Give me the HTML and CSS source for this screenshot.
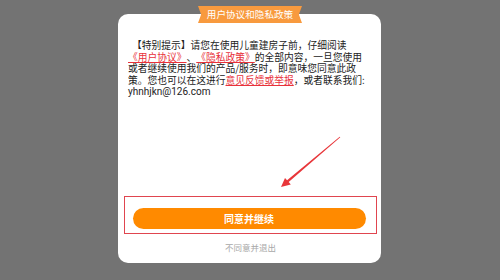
FILE: index.html
```html
<!DOCTYPE html>
<html lang="zh-CN">
<head>
    <meta charset="UTF-8">
    <meta name="viewport" content="width=device-width, initial-scale=1.0">
    <title>用户协议和隐私政策</title>
    <link rel="stylesheet" href="styles.css">
</head>
<body>
    <div class="dialog">
        <div class="ribbon">用户协议和隐私政策</div>

        <p class="notice">
            【特别提示】请您在使用儿童建房子前，仔细阅读<br>
            <a href="#">《用户协议》</a>、<a href="#">《隐私政策》</a>的全部内容，一旦您使用<br>
            或者继续使用我们的产品/服务时，即意味您同意此政<br>
            策。您也可以在这进行<a href="#">意见反馈或举报</a>，或者联系我们:<br>
            <span class="email">yhnhjkn@126.com</span>
        </p>

        <div class="actions">
            <div class="highlight">
                <button class="agree">同意并继续</button>
            </div>
            <div class="decline">不同意并退出</div>
        </div>

        <svg class="arrow" width="263" height="249" viewBox="0 0 263 249">
            <polygon fill="#e8363a" points="221.7,122.7 169.1,166.3 167.0,163.9 163,173 172.8,170.4 170.7,168.1 222.3,123.3"/>
        </svg>
    </div>
</body>
</html>
```

FILE: styles.css
```css
body {
    margin: 0;
    background: #737373;
    font-family: "Noto Sans CJK SC", sans-serif;
}
.dialog {
    position: relative;
    width: 263px;
    height: 249px;
    margin: 14px 0 0 118px;
    background: #fff;
    border-radius: 10px;
    display: flex;
    flex-direction: column;
}
.ribbon {
    position: absolute;
    top: -8px;
    left: 80px;
    width: 104px;
    height: 17px;
    line-height: 17px;
    background: #f89a3e;
    color: #fff;
    font-size: 9.6px;
    text-align: center;
    clip-path: polygon(0 0, 100% 0, 97% 50%, 100% 100%, 0 100%, 3% 50%);
}
.notice {
    margin: 0;
    padding: 26px 0 0 10px;
    font-size: 9.75px;
    line-height: 11.6px;
    color: #222;
    white-space: nowrap;
    text-indent: 4px;
    text-spacing-trim: space-all;
}
.notice a {
    display: inline-block;
    text-indent: 0;
    color: #e8313a;
    text-decoration: underline;
    text-underline-offset: 1px;
}
.email {
    display: inline-block;
    text-indent: 0;
    font-family: Roboto, sans-serif;
    font-size: 10px;
}
.actions {
    margin-top: auto;
    padding: 0 4px 10px 6px;
}
.highlight {
    border: 1.5px solid #e0454f;
    padding: 10.5px 9.5px 4.5px 7.5px;
}
.agree {
    display: block;
    width: 233px;
    height: 21px;
    border: none;
    border-radius: 11px;
    background: #ff8a00;
    color: #fff;
    font-family: "Noto Sans CJK SC", sans-serif;
    font-size: 10px;
    font-weight: 700;
    padding: 0;
}
.decline {
    margin-top: 7px;
    text-align: center;
    font-size: 8.5px;
    line-height: 12px;
    color: #a8a8a8;
}
.arrow {
    position: absolute;
    left: 0;
    top: 0;
    pointer-events: none;
}
```
